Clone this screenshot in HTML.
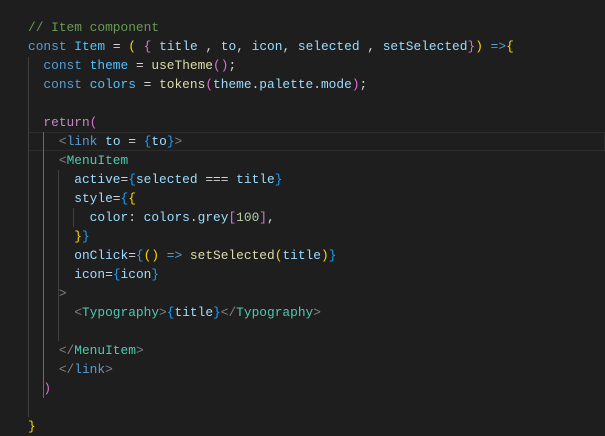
<!DOCTYPE html>
<html><head><style>
body{margin:0;width:605px;height:425px;background:#1e1e1e;overflow:hidden;position:relative;font-family:"Liberation Mono",monospace;font-size:12.85px;}
.l{position:absolute;left:28px;height:19px;line-height:19px;white-space:pre;color:#d4d4d4;}
.g{position:absolute;width:1px;background:#404040;}
.c{color:#6a9955}.k{color:#569cd6}.v{color:#4fc1ff}.f{color:#dcdcaa}.y{color:#ffd700}.p{color:#da70d6}.b{color:#179fff}
.r{color:#c586c0}.t{color:#808080}.n{color:#4ec9b0}.a{color:#9cdcfe}.num{color:#b5cea8}
</style></head><body>
<div style="position:absolute;left:28px;right:0;top:132px;height:19px;border:1px solid #2c2c2c;box-sizing:border-box"></div>
<div class="g" style="left:28px;top:57px;height:360px"></div>
<div class="g" style="left:43px;top:132px;height:266px;background:#6a6a6a"></div>
<div class="g" style="left:58px;top:170px;height:133px"></div>
<div class="g" style="left:58px;top:303px;height:38px"></div>
<div class="g" style="left:73px;top:208px;height:19px"></div>
<div class="l" style="top:18px"><span class="c">// Item component</span></div>
<div class="l" style="top:37px"><span class="k">const</span> <span class="v">Item</span> = <span class="y">(</span> <span class="p">{</span> <span class="a">title</span> , <span class="a">to</span>, <span class="a">icon</span>, <span class="a">selected</span> , <span class="a">setSelected</span><span class="p">}</span><span class="y">)</span> <span class="k">=&gt;</span><span class="y">{</span></div>
<div class="l" style="top:56px">  <span class="k">const</span> <span class="v">theme</span> = <span class="f">useTheme</span><span class="p">()</span>;</div>
<div class="l" style="top:75px">  <span class="k">const</span> <span class="v">colors</span> = <span class="f">tokens</span><span class="p">(</span><span class="a">theme</span>.<span class="a">palette</span>.<span class="a">mode</span><span class="p">)</span>;</div>
<div class="l" style="top:113px">  <span class="r">return</span><span class="p">(</span></div>
<div class="l" style="top:132px">    <span class="t">&lt;</span><span class="k">link</span> <span class="a">to</span> = <span class="b">{</span><span class="a">to</span><span class="b">}</span><span class="t">&gt;</span></div>
<div class="l" style="top:151px">    <span class="t">&lt;</span><span class="n">MenuItem</span></div>
<div class="l" style="top:170px">      <span class="a">active</span>=<span class="b">{</span><span class="a">selected</span> === <span class="a">title</span><span class="b">}</span></div>
<div class="l" style="top:189px">      <span class="a">style</span>=<span class="b">{</span><span class="y">{</span></div>
<div class="l" style="top:208px">        <span class="a">color</span>: <span class="a">colors</span>.<span class="a">grey</span><span class="p">[</span><span class="num">100</span><span class="p">]</span>,</div>
<div class="l" style="top:227px">      <span class="y">}</span><span class="b">}</span></div>
<div class="l" style="top:246px">      <span class="a">onClick</span>=<span class="b">{</span><span class="y">()</span> <span class="k">=&gt;</span> <span class="f">setSelected</span><span class="y">(</span><span class="a">title</span><span class="y">)</span><span class="b">}</span></div>
<div class="l" style="top:265px">      <span class="a">icon</span>=<span class="b">{</span><span class="a">icon</span><span class="b">}</span></div>
<div class="l" style="top:284px">    <span class="t">&gt;</span></div>
<div class="l" style="top:303px">      <span class="t">&lt;</span><span class="n">Typography</span><span class="t">&gt;</span><span class="b">{</span><span class="a">title</span><span class="b">}</span><span class="t">&lt;/</span><span class="n">Typography</span><span class="t">&gt;</span></div>
<div class="l" style="top:341px">    <span class="t">&lt;/</span><span class="n">MenuItem</span><span class="t">&gt;</span></div>
<div class="l" style="top:360px">    <span class="t">&lt;/</span><span class="k">link</span><span class="t">&gt;</span></div>
<div class="l" style="top:379px">  <span class="p">)</span></div>
<div class="l" style="top:417px"><span class="y">}</span></div>
</body></html>
